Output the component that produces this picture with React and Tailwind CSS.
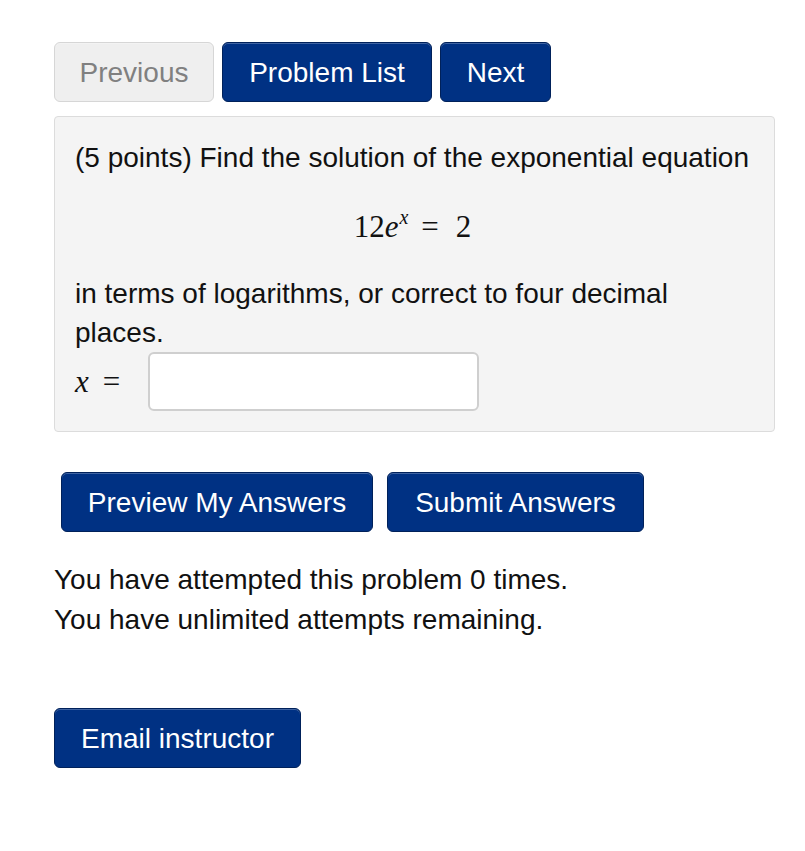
const navBtn =
  "h-[60px] rounded-[6px] border px-[20px] pt-[2px] text-[28px] leading-none shadow-[inset_0_1px_0_rgba(255,255,255,0.25)]";
const blueBtn = "border-[#00215a] bg-[#003183] text-white";

export default function App() {
  return (
    <div className="min-h-screen bg-white pl-[54px] pt-[42px] font-['Liberation_Sans',Arial,sans-serif] text-[#111]">
      <div className="flex gap-[8px]">
        <button
          type="button"
          className={`${navBtn} w-[160px] border-[#d6d6d6] bg-[#efefef] text-[#808080]`}
        >
          Previous
        </button>
        <button type="button" className={`${navBtn} ${blueBtn} w-[210px]`}>
          Problem List
        </button>
        <button type="button" className={`${navBtn} ${blueBtn} w-[111px]`}>
          Next
        </button>
      </div>

      <div className="mt-[14px] w-[721px] rounded-[4px] border border-[#dcdcdc] bg-[#f4f4f4] px-[20px] pb-[20px] pt-[21px] text-[28px] leading-[39px]">
        <p>(5 points) Find the solution of the exponential equation</p>
        <div className="mb-[24px] mt-[30px] flex justify-center pr-[4px] font-['Liberation_Serif','Times_New_Roman',serif] text-[31px] leading-[39px]">
          <span>
            12<i>e</i>
            <i className="relative top-[-13px] ml-[1px] text-[20px]">x</i>
            <span className="ml-[13px] mr-[17px]">=</span>2
          </span>
        </div>
        <p>in terms of logarithms, or correct to four decimal places.</p>
        <div className="flex items-center">
          <span className="w-[73px] font-['Liberation_Serif','Times_New_Roman',serif] text-[31px]">
            <i>x</i>
            <span className="ml-[14px]">=</span>
          </span>
          <input
            type="text"
            className="h-[59px] w-[331px] rounded-[6px] border-2 border-[#cfcfcf] bg-white px-3"
          />
        </div>
      </div>

      <div className="mt-[40px] flex gap-[14px] pl-[7px]">
        <button type="button" className={`${navBtn} ${blueBtn} w-[312px]`}>
          Preview My Answers
        </button>
        <button type="button" className={`${navBtn} ${blueBtn} w-[257px]`}>
          Submit Answers
        </button>
      </div>

      <div className="mt-[28px] text-[28px] leading-[40px]">
        <p>You have attempted this problem 0 times.</p>
        <p>You have unlimited attempts remaining.</p>
      </div>

      <button type="button" className={`${navBtn} ${blueBtn} mt-[68px] w-[247px]`}>
        Email instructor
      </button>
    </div>
  );
}
